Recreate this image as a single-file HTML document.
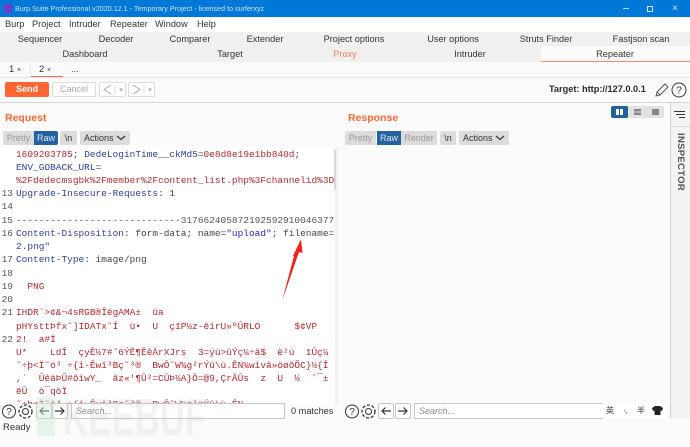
<!DOCTYPE html>
<html><head><meta charset="utf-8">
<style>
html,body{margin:0;padding:0}
body{width:690px;height:436px;position:relative;overflow:hidden;background:#fbfbfc;font-family:"Liberation Sans","Noto Sans CJK SC",sans-serif;color:#333;font-size:9.2px;filter:blur(.3px)}
.a{position:absolute;white-space:nowrap}
.c{position:absolute;white-space:nowrap;transform:translateX(-50%)}
.ln{position:absolute;left:0;width:13px;text-align:right;font:9.47px/13px "Liberation Mono",monospace;color:#555}
.t{position:absolute;left:16px;width:319px;overflow:hidden;white-space:pre;font:9.47px/13px "Liberation Mono",monospace;color:#444}
.r{color:#b02a30}.b{color:#2f3f9e}.bb{color:#2222cc}
.btn{position:absolute;box-sizing:border-box;height:14px;line-height:14px;text-align:center;background:#dcdcdc;font-size:9px;color:#333}
.ic{position:absolute;box-sizing:border-box;background:#fff;border:1px solid #c6c6cc;border-radius:2px}
</style></head><body>
<div class="a" style="left:0;top:0;width:690px;height:17px;background:#0078d7"></div>
<div class="a" style="left:4px;top:4px;width:8px;height:9px;background:#6a3fd0;border-radius:1px"></div>
<div class="a" style="left:15px;top:3px;font-size:7.2px;line-height:11px;color:#cfe4f7">Burp Suite Professional v2020.12.1 - Temporary Project - licensed to surferxyz</div>
<div class="a" style="left:623px;top:8px;width:6px;height:1px;background:#bcd9f2"></div>
<div class="a" style="left:647px;top:6px;width:6px;height:6px;border:1px solid #d5e7f7;box-sizing:border-box"></div>
<div class="a" style="left:672px;top:2px;font-size:10px;line-height:13px;color:#e2eefa">×</div>

<div class="a" style="left:0;top:17px;width:690px;height:15px;background:#fff"></div>
<div class="a" style="left:5px;top:18px;font-size:9.2px;line-height:12px;color:#333">Burp</div>
<div class="a" style="left:32px;top:18px;font-size:9.2px;line-height:12px">Project</div>
<div class="a" style="left:69px;top:18px;font-size:9.2px;line-height:12px">Intruder</div>
<div class="a" style="left:110px;top:18px;font-size:9.2px;line-height:12px">Repeater</div>
<div class="a" style="left:155px;top:18px;font-size:9.2px;line-height:12px">Window</div>
<div class="a" style="left:197px;top:18px;font-size:9.2px;line-height:12px">Help</div>

<div class="a" style="left:0;top:32px;width:690px;height:30px;background:#f0f0f1;border-bottom:1px solid #d8d8dc;box-sizing:content-box"></div>
<div class="c" style="left:40px;top:33px;line-height:12px">Sequencer</div>
<div class="c" style="left:116px;top:33px;line-height:12px">Decoder</div>
<div class="c" style="left:190px;top:33px;line-height:12px">Comparer</div>
<div class="c" style="left:265px;top:33px;line-height:12px">Extender</div>
<div class="c" style="left:354px;top:33px;line-height:12px">Project options</div>
<div class="c" style="left:453px;top:33px;line-height:12px">User options</div>
<div class="c" style="left:546px;top:33px;line-height:12px">Struts Finder</div>
<div class="c" style="left:641px;top:33px;line-height:12px">Fastjson scan</div>
<div class="a" style="left:541px;top:46px;width:149px;height:16px;background:#fbfbfc;border-bottom:1px solid #f28b6c;box-sizing:border-box"></div>
<div class="c" style="left:85px;top:48px;line-height:12px">Dashboard</div>
<div class="c" style="left:230px;top:48px;line-height:12px">Target</div>
<div class="c" style="left:345px;top:48px;line-height:12px;color:#f0805c">Proxy</div>
<div class="c" style="left:470px;top:48px;line-height:12px">Intruder</div>
<div class="c" style="left:615px;top:48px;line-height:12px">Repeater</div>

<div class="a" style="left:0;top:62px;width:690px;height:15px;background:#fbfbfc;border-bottom:1px solid #e2e2e6"></div>
<div class="a" style="left:9px;top:63px;line-height:13px;font-size:9.5px">1 <span style="font-size:7px">×</span></div>
<div class="a" style="left:39px;top:63px;line-height:13px;font-size:9.5px">2 <span style="font-size:7px">×</span></div>
<div class="a" style="left:31px;top:76px;width:32px;height:1px;background:#f0704a"></div>
<div class="a" style="left:30px;top:62px;width:1px;height:15px;background:#e8e8ea"></div>
<div class="a" style="left:71px;top:63px;line-height:13px;font-size:9px">...</div>

<div class="a" style="left:5px;top:82px;width:44px;height:15px;background:#ff6633;border-radius:2px;color:#fff;font-weight:bold;text-align:center;line-height:15px;font-size:9px">Send</div>
<div class="a" style="left:52px;top:82px;width:44px;height:15px;background:#fff;border:1px solid #dcdcdf;box-sizing:border-box;border-radius:2px;color:#aaa;text-align:center;line-height:13px;font-size:9px">Cancel</div>
<div class="a" style="left:99px;top:82px;width:27px;height:15px;background:#fff;border:1px solid #dcdcdf;box-sizing:border-box;border-radius:2px"></div>
<div class="a" style="left:128px;top:82px;width:27px;height:15px;background:#fff;border:1px solid #dcdcdf;box-sizing:border-box;border-radius:2px"></div>
<svg class="a" style="left:99px;top:82px" width="56" height="15" fill="none" stroke="#aaa"><path d="M12 3 5 7.500l7 4.500"/><path d="M16 3v9M45 3v9" stroke="#ddd"/><path d="M34 3 41 7.500l-7 4.500"/><path d="M20 6.500h4l-2 3zM49 6.500h4l-2 3z" fill="#aaa" stroke="none"/></svg>

<div class="a" style="left:549px;top:83px;font-size:9.2px;font-weight:bold;line-height:13px;color:#2a2a2a">Target: http://127.0.0.1</div>
<svg class="a" style="left:654px;top:82px" width="36" height="16" fill="none" stroke="#555"><path d="M2 14l1-4 8-8 3 3-8 8zM3 10l3 3" /><circle cx="25" cy="8" r="7" stroke="#333"/><text x="25" y="11.500" text-anchor="middle" font-size="10" font-family="Liberation Sans" fill="#333" stroke="none">?</text></svg>

<div class="a" style="left:0;top:102px;width:690px;height:1px;background:#d4d4da"></div>
<div class="a" style="left:670px;top:103px;width:20px;height:316px;background:#f3f3f5;border-left:1px solid #cfcfd4"></div>
<div class="a" style="left:671px;top:126px;width:19px;height:1px;background:#d8d8dc"></div>
<svg class="a" style="left:674px;top:110px" width="13" height="10" stroke="#333"><path d="M0 1.500h11M2 4.500h9M5 7.500h6"/></svg>
<div class="a" style="left:686px;top:133px;font-size:9.5px;font-weight:bold;line-height:12px;color:#555;transform-origin:0 0;transform:rotate(90deg);letter-spacing:.3px">INSPECTOR</div>
<div class="a" style="left:611px;top:106px;width:53px;height:12px;background:#e2e2e4;border-radius:2px"></div>
<div class="a" style="left:611px;top:106px;width:17px;height:12px;background:#23629f;border-radius:2px"></div>
<svg class="a" style="left:611px;top:106px" width="53" height="12"><path d="M5 3h3v6H5zM9 3h3v6H9z" fill="#fff"/><path d="M23 3h7v2.500h-7zM23 6.500h7V9h-7z" fill="#888"/><path d="M41 3h7v6h-7z" fill="#888"/></svg>

<div class="a" style="left:5px;top:112px;font-size:10.5px;font-weight:bold;line-height:13px;color:#ff6633">Request</div>
<div class="a" style="left:348px;top:112px;font-size:10.5px;font-weight:bold;line-height:13px;color:#ff6633">Response</div>

<div class="btn" style="left:3px;top:131px;width:31px;color:#999;border-radius:2px 0 0 2px">Pretty</div>
<div class="btn" style="left:34px;top:131px;width:24px;background:#23629f;color:#dde8f2;border-radius:0 2px 2px 0">Raw</div>
<div class="btn" style="left:60px;top:131px;width:17px;border-radius:2px">\n</div>
<div class="btn" style="left:80px;top:131px;width:50px;border-radius:2px;text-align:left;padding-left:4px">Actions</div>
<svg class="a" style="left:116px;top:134px" width="10" height="8" fill="none" stroke="#333" stroke-width="1.200"><path d="M1 2l4 3.500L9 2"/></svg>

<div class="btn" style="left:345px;top:131px;width:31px;color:#999;border-radius:2px 0 0 2px">Pretty</div>
<div class="btn" style="left:377px;top:131px;width:24px;background:#23629f;color:#dde8f2">Raw</div>
<div class="btn" style="left:401px;top:131px;width:36px;color:#999;border-radius:0 2px 2px 0">Render</div>
<div class="btn" style="left:440px;top:131px;width:16px;border-radius:2px">\n</div>
<div class="btn" style="left:459px;top:131px;width:50px;border-radius:2px;text-align:left;padding-left:4px">Actions</div>
<svg class="a" style="left:495px;top:134px" width="10" height="8" fill="none" stroke="#333" stroke-width="1.200"><path d="M1 2l4 3.500L9 2"/></svg>

<div class="a" style="left:0;top:147px;width:337px;height:257px;background:#fff"></div>
<div class="a" style="left:335px;top:147px;width:3px;height:257px;background:#f1f1f2"></div>
<div class="a" style="left:334px;top:150px;width:2px;height:40px;background:#d8d8d8"></div>
<div class="a" style="left:341px;top:257px;width:2px;height:10px;background:repeating-linear-gradient(#888 0 1.5px,transparent 1.5px 3.5px)"></div>

<div class="t" style="top:148px"><span class="r">1609203785</span>; <span class="b">DedeLoginTime__ckMd5</span>=<span class="r">0e8d8e19e1bb840d</span>;</div>
<div class="t" style="top:161px"><span class="b">ENV_GOBACK_URL</span>=</div>
<div class="t" style="top:174px"><span class="r">%2Fdedecmsgbk%2Fmember%2Fcontent_list.php%3Fchannelid%3D1</span></div>
<div class="ln" style="top:187px">13</div><div class="t" style="top:187px"><span class="b">Upgrade-Insecure-Requests</span>: 1</div>
<div class="ln" style="top:200px">14</div>
<div class="ln" style="top:214px">15</div><div class="t" style="top:214px;color:#555">-----------------------------3176624058721925929100463773</div>
<div class="ln" style="top:227px">16</div><div class="t" style="top:227px"><span class="b">Content-Disposition</span>: form-data; name=<span class="bb">"upload"</span>; filename=</div>
<div class="t" style="top:240px"><span class="b">2.png"</span></div>
<div class="ln" style="top:253px">17</div><div class="t" style="top:253px"><span class="b">Content-Type</span>: image/png</div>
<div class="ln" style="top:267px">18</div>
<div class="ln" style="top:280px">19</div><div class="t" style="top:280px"><span class="r">  PNG</span></div>
<div class="ln" style="top:293px">20</div>
<div class="ln" style="top:306px">21</div><div class="t" style="top:306px"><span class="r">IHDR`&gt;¢&amp;¬4sRGB®ÎégAMA±  üa</span></div>
<div class="t" style="top:320px"><span class="r">pHYsttÞfx˜]IDATx˜Í  ù•  U  çīP½z-êîrU»ºÛRLO      $¢VP</span></div>
<div class="ln" style="top:333px">22</div><div class="t" style="top:333px"><span class="r">2!  a#Ï</span></div>
<div class="t" style="top:346px"><span class="r">U*    LdÎ  çyÊ½7#˜6ÝÊ¶ÊêÄrXJrs  3=ýù&gt;ûÝç¼÷ä$  è²ú  īÛç¼</span></div>
<div class="t" style="top:359px"><span class="r">˜÷þ&lt;Ï˜ö³ ÷{î-Êwî³Bç˜³®  BwÔ˜W¾g²rÝû\ù.ÊN¾wîvâ»öøõÕC}½{Î</span></div>
<div class="t" style="top:372px"><span class="r">,`  ÛêäÞÛ#õîwY_  âz«'¶Û²=CÜÞ½A}Ô=@9,ÇrÃÛs  z  U  ½  ˆ¯±</span></div>
<div class="t" style="top:385px"><span class="r">ēÛ  ò¯qòÏ</span></div>
<div class="t" style="top:398px;height:6px"><span class="r">˜÷þ&lt;Ï˜ö³ ÷{î-Êwî³Bç˜³®  BwÔ˜W¾g²rÝû\ù.ÊN</span></div>

<svg class="a" style="left:270px;top:230px" width="50" height="75"><path d="M12 71 L24 26 L23 26 L31 9 L32.500 23 L29 22 Z" fill="#f5211a"/></svg>

<div class="a" style="left:0;top:404px;width:337px;height:15px;background:#fbfbfc"></div>
<svg class="a" style="left:1px;top:403px" width="34" height="17" fill="none" stroke="#333"><circle cx="8" cy="8.500" r="6.500"/><text x="8" y="12" text-anchor="middle" font-size="10" font-family="Liberation Sans" fill="#333" stroke="none">?</text><circle cx="24.500" cy="8.500" r="3"/><circle cx="24.500" cy="8.500" r="6.500" stroke-dasharray="3 1.800" stroke-width="1.300"/></svg>
<div class="ic" style="left:36px;top:403px;width:16px;height:16px"></div>
<div class="ic" style="left:52px;top:403px;width:16px;height:16px"></div>
<svg class="a" style="left:36px;top:403px" width="32" height="16" fill="none" stroke="#333" stroke-width="1.200"><path d="M13 8H4M7.500 4.500 4 8l3.500 3.500M19 8h9M24.500 4.500 28 8l-3.500 3.500"/></svg>
<div class="a" style="left:71px;top:403px;width:214px;height:16px;box-sizing:border-box;background:#fff;border:1px solid #c6c6cc;font-style:italic;color:#888;font-size:9px;line-height:14px;padding-left:4px">Search...</div>
<div class="a" style="left:291px;top:405px;line-height:12px;font-size:9.2px">0 matches</div>

<div class="a" style="left:338px;top:147px;width:332px;height:272px;background:#fbfbfc"></div>
<svg class="a" style="left:344px;top:403px" width="34" height="17" fill="none" stroke="#333"><circle cx="8" cy="8.500" r="6.500"/><text x="8" y="12" text-anchor="middle" font-size="10" font-family="Liberation Sans" fill="#333" stroke="none">?</text><circle cx="24.500" cy="8.500" r="3"/><circle cx="24.500" cy="8.500" r="6.500" stroke-dasharray="3 1.800" stroke-width="1.300"/></svg>
<div class="ic" style="left:378px;top:403px;width:16px;height:16px"></div>
<div class="ic" style="left:395px;top:403px;width:16px;height:16px"></div>
<svg class="a" style="left:378px;top:403px" width="33" height="16" fill="none" stroke="#333" stroke-width="1.200"><path d="M13 8H4M7.500 4.500 4 8l3.500 3.500M20 8h9M25.500 4.500 29 8l-3.500 3.500"/></svg>
<div class="a" style="left:414px;top:403px;width:190px;height:16px;box-sizing:border-box;background:#fff;border:1px solid #c6c6cc;font-style:italic;color:#888;font-size:9px;line-height:14px;padding-left:4px">Search...</div>
<div class="a" style="left:602px;top:403px;width:65px;height:16px;background:#fff;border-radius:2px"></div>
<div class="a" style="left:606px;top:405px;font-size:8px;line-height:12px;color:#333;font-family:'Liberation Sans','Noto Sans CJK SC',sans-serif">英</div>
<div class="a" style="left:623px;top:405px;font-size:8px;line-height:12px;color:#444">·,</div>
<div class="a" style="left:637px;top:405px;font-size:8px;line-height:12px;color:#333;font-family:'Liberation Sans','Noto Sans CJK SC',sans-serif">半</div>
<svg class="a" style="left:652px;top:406px" width="11" height="10"><path d="M0 2 3 0h5l3 2-1 3-1.500-.5V9h-6V4.500L1 5z" fill="#222"/></svg>

<div class="a" style="left:3px;top:421px;font-size:9.5px;line-height:13px;color:#333">Ready</div>

<div class="a" style="left:37px;top:397px;width:18px;height:39px;background:#cfe6d3;opacity:.45"></div>
<div class="a" style="left:63px;top:391px;font-size:52px;font-weight:bold;line-height:54px;color:#c9c9cc;opacity:.22;transform-origin:0 0;transform:scaleX(.67)">KEEBUF</div>
</body></html>
